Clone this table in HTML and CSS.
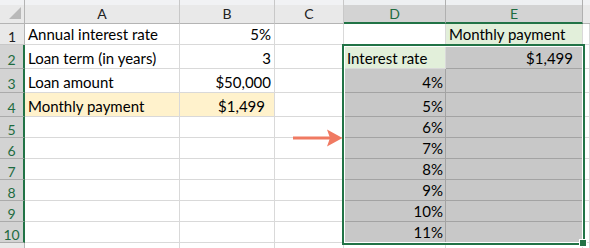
FILE: index.html
```html
<!DOCTYPE html>
<html>
<head>
<meta charset="utf-8">
<link rel="stylesheet" href="styles.css">
</head>
<body>
<div class="sheet">
  <div class="h corner"><span class="tri"></span></div>
  <div class="h col">A</div>
  <div class="h col">B</div>
  <div class="h col">C</div>
  <div class="h col sel">D</div>
  <div class="h col sel">E</div>
  <div class="h col last"></div>

  <div class="h row">1</div>
  <div class="c">Annual interest rate</div>
  <div class="c num">5%</div>
  <div class="c"></div>
  <div class="c"></div>
  <div class="c lg">Monthly payment</div>
  <div class="c"></div>

  <div class="h row sel">2</div>
  <div class="c">Loan term (in years)</div>
  <div class="c num">3</div>
  <div class="c"></div>
  <div class="c lg">Interest rate</div>
  <div class="c s num cur">$1,499</div>
  <div class="c"></div>

  <div class="h row sel">3</div>
  <div class="c">Loan amount</div>
  <div class="c num">$50,000</div>
  <div class="c"></div>
  <div class="c s num">4%</div>
  <div class="c s"></div>
  <div class="c"></div>

  <div class="h row sel">4</div>
  <div class="c yl">Monthly payment</div>
  <div class="c yl num cur">$1,499</div>
  <div class="c"></div>
  <div class="c s num">5%</div>
  <div class="c s"></div>
  <div class="c"></div>

  <div class="h row sel">5</div>
  <div class="c"></div>
  <div class="c"></div>
  <div class="c"></div>
  <div class="c s num">6%</div>
  <div class="c s"></div>
  <div class="c"></div>

  <div class="h row sel">6</div>
  <div class="c"></div>
  <div class="c"></div>
  <div class="c"></div>
  <div class="c s num">7%</div>
  <div class="c s"></div>
  <div class="c"></div>

  <div class="h row sel">7</div>
  <div class="c"></div>
  <div class="c"></div>
  <div class="c"></div>
  <div class="c s num">8%</div>
  <div class="c s"></div>
  <div class="c"></div>

  <div class="h row sel">8</div>
  <div class="c"></div>
  <div class="c"></div>
  <div class="c"></div>
  <div class="c s num">9%</div>
  <div class="c s"></div>
  <div class="c"></div>

  <div class="h row sel">9</div>
  <div class="c"></div>
  <div class="c"></div>
  <div class="c"></div>
  <div class="c s num">10%</div>
  <div class="c s"></div>
  <div class="c"></div>

  <div class="h row sel">10</div>
  <div class="c"></div>
  <div class="c"></div>
  <div class="c"></div>
  <div class="c s num">11%</div>
  <div class="c s"></div>
  <div class="c"></div>

  <div class="h row"></div>
  <div class="c"></div>
  <div class="c"></div>
  <div class="c"></div>
  <div class="c"></div>
  <div class="c"></div>
  <div class="c"></div>

  <div class="selection"><span class="handle"></span></div>
  <svg class="arrow" width="50" height="18" viewBox="0 0 50 18">
    <rect x="0" y="7.5" width="38" height="3" fill="#f07a62"/>
    <polygon points="34,0.5 49.5,9 34,17.5 37,9" fill="#f07a62"/>
  </svg>
</div>
</body>
</html>
```

FILE: styles.css
```css
html, body {
  margin: 0;
  padding: 0;
  background: #ffffff;
}

.sheet {
  position: relative;
  width: 590px;
  height: 248px;
  overflow: hidden;
  display: grid;
  grid-template-columns: 25px 155px 95px 69px 102px 137px 1fr;
  grid-template-rows: 24px 21px 24px 24px 24px repeat(6, 21px) 1fr;
  font-family: "Lato", "Open Sans", sans-serif;
  font-size: 15px;
  color: #000;
}

.c {
  box-sizing: border-box;
  border-right: 1px solid #d9d9d9;
  border-bottom: 1px solid #d9d9d9;
  display: flex;
  align-items: flex-end;
  padding: 0 3px 0 3px;
  line-height: 19px;
  white-space: nowrap;
  overflow: hidden;
}

.num {
  justify-content: flex-end;
}

.cur {
  padding-right: 9px;
}

.yl {
  background: #fff2cc;
}

.lg {
  background: #e2efda;
}

.s {
  background: #c8c8c8;
  border-right-color: #a3a3a3;
  border-bottom-color: #a3a3a3;
  padding-right: 2px;
}

.s.cur {
  padding-right: 9px;
}

.h {
  box-sizing: border-box;
  background: #e9e9e9;
  color: #222;
  font-size: 14px;
  display: flex;
  align-items: center;
  justify-content: center;
}

.col {
  background: linear-gradient(#f1f2f4 0 5px, #e9e9e9 5px);
  border-right: 1px solid #c8c8c8;
  border-bottom: 1px solid #b4b4b4;
  padding-top: 4px;
}

.col.last {
  border-right: none;
}

.col.sel {
  background: linear-gradient(#eef0f2 0 5px, #d3d3d3 5px);
  color: #1e6b40;
  border-bottom: 2px solid #217346;
  border-right-color: #b0b0b0;
}

.corner {
  position: relative;
  background: linear-gradient(#f1f2f4 0 5px, #e9e9e9 5px);
  border-right: 1px solid #b4b4b4;
  border-bottom: 1px solid #b4b4b4;
}

.tri {
  position: absolute;
  right: 3px;
  bottom: 4px;
  width: 0;
  height: 0;
  border-left: 12px solid transparent;
  border-bottom: 12px solid #b9b9b9;
}

.row {
  border-right: 1px solid #b4b4b4;
  border-bottom: 1px solid #c8c8c8;
  padding-top: 5px;
  justify-content: center;
}

.row.sel {
  background: #d3d3d3;
  color: #1e6b40;
  border-right: 2px solid #217346;
  border-bottom-color: #ababab;
}

.selection {
  position: absolute;
  left: 342px;
  top: 44px;
  width: 243px;
  height: 201px;
  box-sizing: border-box;
  border: 2px solid #217346;
  box-shadow: inset 0 0 0 1px #ffffff;
  pointer-events: none;
}

.handle {
  position: absolute;
  right: -4px;
  bottom: -4px;
  width: 6px;
  height: 6px;
  background: #217346;
  border: 1px solid #ffffff;
}

.arrow {
  position: absolute;
  left: 293px;
  top: 129px;
}
```
